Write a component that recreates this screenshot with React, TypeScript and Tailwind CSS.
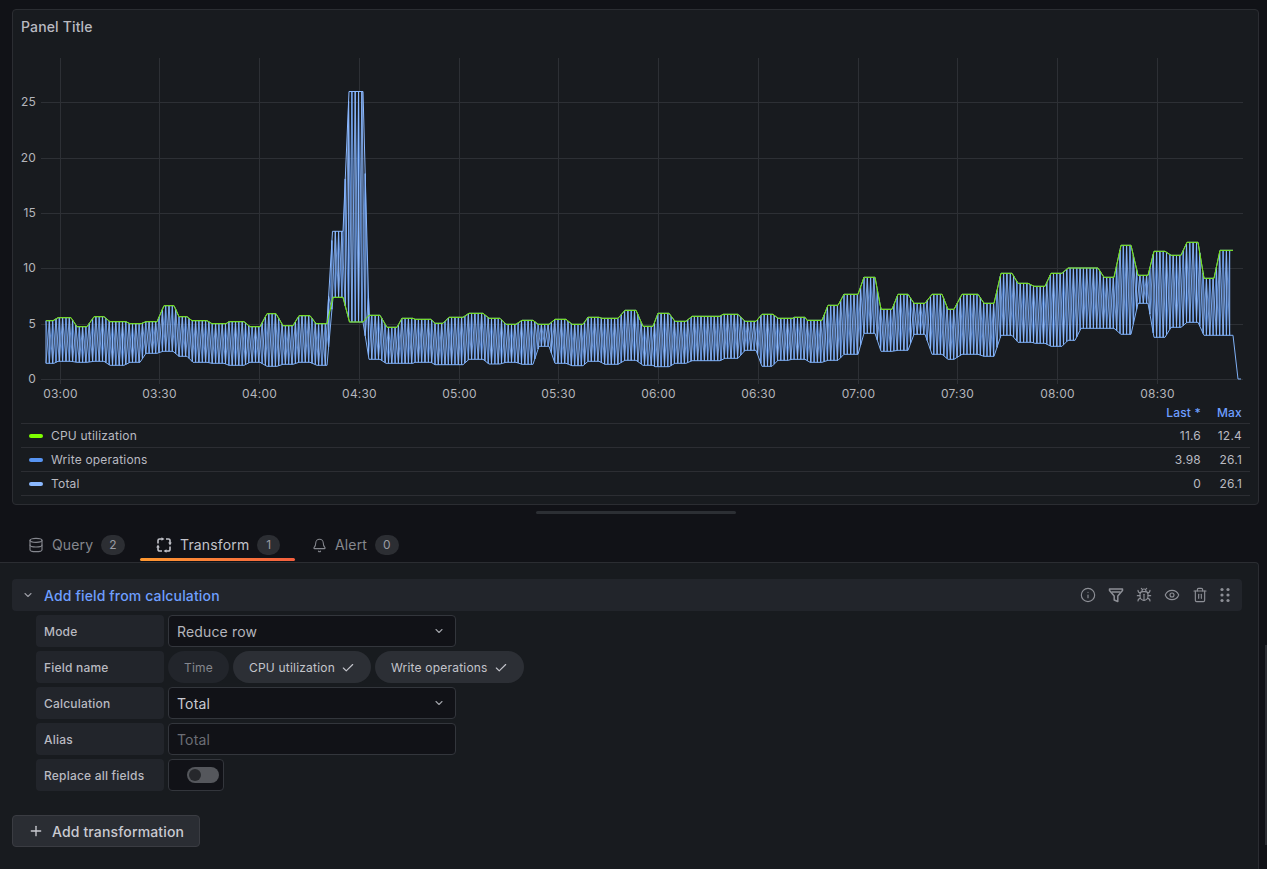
import React from "react";
import { Database, Bell, Info, Bug, Eye, Trash2, Check, ChevronDown, Plus } from "lucide-react";

type P = [number, number, number];

const topP: P[] = [
  [46,53,320.7],[58,71,317.7],[77,87,326.7],[94,104,316.7],[110,126,321.7],[130,141,323.7],[146,157,321.7],[164,174,305.7],
  [179,187,316.7],[192,207,320.7],[212,226,323.7],[229,244,321.7],[250,260,326.7],[267,276,313.7],[283,293,325.7],[299,310,315.7],
  [316,327,323.7],[332.5,343,231.3],[349,363,91.5],[369,380,315.3],[387,397,327.3],[402,413,318.3],[415,431,319.3],[435,443,323.3],
  [449,463,317.3],[469,483,313.3],[489,500,318.3],[506,516,324.3],[522,533,320.3],[538,549,324.3],[555,566,319.3],[572,583,324.3],
  [588,599,317.3],[602,618,318.3],[625,636,310.3],[643,653,326.3],[658,669,313.3],[675,686,321.3],[692,720,316.3],[723,738,314.3],
  [745,756,321.3],[762,773,314.3],[778,793,318.3],[794,805,317.3],[807,822,320.3],[828,838,305.3],[844,858,294.3],[864,875,277.3],
  [881,892,309.3],[898,908,294.3],[914,925,303.3],[932,942,294.3],[948,954,309.3],[962,978,294.3],[984,994,303.3],[1001,1012,273.3],
  [1018,1028,283.3],[1034,1045,286.3],[1051,1062,273.3],[1068,1098,268],[1104,1114,277.3],[1121,1131,245.3],[1138,1148,275.3],
  [1154,1165,251.3],[1171,1181,255.3],[1187,1198,242.3],[1204,1214,278.3],[1220,1233,250.3],
];

const botP: P[] = [
  [46,54,363.3],[58,71,361.3],[77,87,362.3],[94,104,361.3],[110,124,365.3],[130,140,362.3],[146,157,353.3],[163,173,351.3],
  [179,187,356.3],[193,207,362.3],[212,224,363.3],[229,244,365.3],[250,260,362.3],[267,277,366.3],[283,293,364.3],[299,310,362.3],
  [317,327,365.3],[333,343,297.3],[349.5,363,322],[369,380,359.3],[386,413,363.3],[415,431,362.3],[435,463,364.7],[469,483,359.3],
  [489,500,364],[506,516,362.3],[522,533,364.3],[539,549,346.3],[555,566,363.3],[572,583,365.7],[588,599,361.3],[605,618,364.3],
  [625,636,360.3],[643,653,365.3],[655,669,366.7],[675,686,363.3],[692,720,360.7],[725,738,358.3],[745,756,350.3],[762,772,366.3],
  [778,788,360.3],[792,805,359.3],[810,822,362.3],[828,838,360.3],[844,858,354.3],[864,875,333.3],[881,892,351.3],[898,908,350.3],
  [914,925,334.3],[932,942,354.3],[948,954,359.3],[962,978,354.3],[984,994,356.3],[1001,1012,335.3],[1018,1032,342.3],[1035,1045,343.3],
  [1051,1062,346.3],[1068,1075,340.3],[1081,1114,328.3],[1121,1131,334.3],[1138,1148,303.3],[1154,1165,337.3],[1171,1181,327.3],
  [1187,1198,322.3],[1204,1233,335.3],
];

const cpuP: P[] = [
  ...topP.filter((p) => p[0] < 330),
  [333,343,297.3],[349.5,363,322],
  ...topP.filter((p) => p[0] >= 369),
];

const pts = (l: P[]) => l.flatMap(([a, b, y]) => [[a, y], [b, y]] as [number, number][]);
const interp = (l: P[]) => {
  const q = pts(l);
  return (x: number) => {
    for (let i = 1; i < q.length; i++) {
      if (x <= q[i][0]) {
        const [x0, y0] = q[i - 1];
        const [x1, y1] = q[i];
        return y0 + ((y1 - y0) * (x - x0)) / Math.max(x1 - x0, 0.01);
      }
    }
    return q[q.length - 1][1];
  };
};
const line = (q: [number, number][]) => q.map(([x, y], i) => `${i ? "L" : "M"}${x.toFixed(1)} ${y.toFixed(1)}`).join("");

const top = interp(topP);
const bot = interp(botP);
const xs: number[] = [];
for (let x = 46; x <= 1233; x += 3.325) xs.push(x);

const verticals = xs.map((x) => `M${x.toFixed(1)} ${top(x).toFixed(1)}V${bot(x).toFixed(1)}`).join("");
const zig = line(xs.map((x, i) => [x, i % 2 ? bot(x) : top(x)] as [number, number]));
const zig2 = line(xs.map((x, i) => [x, i % 2 ? top(x) : bot(x)] as [number, number]));

const yTicks: [string, number, number][] = [["25", 102.5, 106], ["20", 158.5, 162], ["15", 213.5, 217], ["10", 268.5, 272], ["5", 324.5, 328], ["0", 379.5, 383]];
const xTicks: [string, number][] = [
  ["03:00", 60.5], ["03:30", 159.5], ["04:00", 259.5], ["04:30", 359.5], ["05:00", 459.5], ["05:30", 558.5],
  ["06:00", 658.5], ["06:30", 758.5], ["07:00", 858.5], ["07:30", 957.5], ["08:00", 1057.5], ["08:30", 1157.5],
];

function Chart() {
  return (
    <svg className="block w-[1244px] h-[360px]" viewBox="13 44 1244 360" fill="none">
      {yTicks.map(([t, y, ty]) => (
        <g key={t}>
          <line x1="41" x2="1243" y1={y} y2={y} stroke="#2d3035" />
          <text x="36" y={ty} textAnchor="end" fontSize="12" letterSpacing="0.2" fill="#b4b5bb">{t}</text>
        </g>
      ))}
      {xTicks.map(([t, x]) => (
        <g key={t}>
          <line x1={x} x2={x} y1="58" y2="384" stroke="#2d3035" />
          <text x={x} y="398" textAnchor="middle" fontSize="12" letterSpacing="0.2" fill="#b4b5bb">{t}</text>
        </g>
      ))}
      <path d={zig} stroke="#5794f2" strokeWidth="0.9" opacity="0.8" />
      <path d={zig2} stroke="#8ab8ff" strokeWidth="0.9" opacity="0.85" />
      <path d={verticals} stroke="#8ab8ff" strokeWidth="1" />
      <path d={line([...pts(botP), [1238, 379], [1241, 379]])} stroke="#7fb0f5" strokeWidth="1" />
      <path d={line(pts(topP))} stroke="#8ab8ff" strokeWidth="1" />
      <path d={line(pts(cpuP))} stroke="#73e600" strokeWidth="1" />
    </svg>
  );
}

function LegendRow({ color, name, last, max, end }: { color: string; name: string; last: string; max: string; end?: boolean }) {
  return (
    <div className={`flex items-center border-t border-[#2c2e33] text-xs tracking-[0.01667em] text-[#b9bac1] ${end ? "h-[25px] border-b" : "h-6"}`}>
      <span className="ml-2 w-[14px] h-1 rounded-sm" style={{ background: color }} />
      <span className="ml-2">{name}</span>
      <span className="ml-auto w-[60px] text-right">{last}</span>
      <span className="w-[41px] text-right mr-2">{max}</span>
    </div>
  );
}

function TransformIcon() {
  return (
    <svg width="16" height="16" viewBox="0 0 16 16" fill="none" stroke="currentColor" strokeWidth="1.6">
      <path d="M2 6.5V3.5a1.5 1.5 0 0 1 1.5-1.5H6" />
      <path d="M10 2h2.5A1.5 1.5 0 0 1 14 3.5V6" />
      <path d="M14 9.5v3a1.5 1.5 0 0 1-1.5 1.5H10" />
      <path d="M6 14H3.5A1.5 1.5 0 0 1 2 12.500V10" />
      <path d="M5.500 .2 8.500 2 5.500 3.800zM12.200 5.500h3.600L14 8.500zM10.500 12.200v3.600L7.500 14zM.2 10.500 2 7.500l1.800 3z" fill="currentColor" stroke="none" />
    </svg>
  );
}

function FilterIcon() {
  return (
    <svg width="16" height="16" viewBox="0 0 16 16" fill="none" stroke="currentColor" strokeWidth="1.5" strokeLinejoin="round">
      <path d="M1.500 2h13v1.500L9.800 9v5.500L6.200 13V9L1.500 3.500z" />
      <path d="M3.500 5h9" />
    </svg>
  );
}

function DragDots() {
  return (
    <svg width="16" height="16" viewBox="0 0 16 16" fill="currentColor">
      <circle cx="5" cy="2.5" r="1.6" /><circle cx="11" cy="2.5" r="1.6" />
      <circle cx="5" cy="8" r="1.6" /><circle cx="11" cy="8" r="1.6" />
      <circle cx="5" cy="13.5" r="1.6" /><circle cx="11" cy="13.5" r="1.6" />
    </svg>
  );
}

function Tab({ icon, label, count, w, active }: { icon: React.ReactNode; label: string; count: string; w: string; active?: boolean }) {
  return (
    <div className={`relative flex items-center h-[29px] pl-4 pb-[5px] text-sm tracking-[0.01071em] ${w} ${active ? "text-[#c2c3ca]" : "text-[#85878e]"}`}>
      <span className="w-4 h-4 mr-2 flex items-center justify-center">{icon}</span>
      <span>{label}</span>
      <span className="ml-2 h-5 min-w-[23px] px-2 rounded-full bg-[#2c2e33] text-xs flex items-center justify-center text-[#9a9ca3]">{count}</span>
      {active && <span className="absolute left-0 right-0 bottom-[1px] h-[3px] rounded-sm bg-gradient-to-r from-[#ff9830] to-[#f55f3e]" />}
    </div>
  );
}

function Label({ children }: { children: React.ReactNode }) {
  return <div className="w-32 h-8 px-2 pt-[1px] flex items-center bg-[#22252b] rounded-sm text-xs font-medium tracking-[0.01667em] text-[#b9bac1]">{children}</div>;
}

function SelectBox({ value, muted }: { value: string; muted?: boolean }) {
  return (
    <div className={`w-72 h-8 pl-2 pr-[10px] flex items-center justify-between bg-[#111217] border border-[#33363c] rounded-sm text-sm tracking-[0.01071em] ${muted ? "text-[#b4b5bc]" : "text-[#c9cad1]"}`}>
      <span className="pt-[1px]">{value}</span>
      <ChevronDown size={12} strokeWidth={2.2} className="text-[#a0a2a8]" />
    </div>
  );
}

function Chip({ text, on }: { text: string; on?: boolean }) {
  return (
    <div className={`h-8 px-4 pt-[1px] flex items-center gap-[6px] rounded-full text-xs tracking-[0.01667em] ${on ? "bg-[#2c2f35] text-[#c3c4cb]" : "bg-[#22252b] text-[#85878e]"}`}>
      <span>{text}</span>
      {on && <Check size={14} strokeWidth={2} />}
    </div>
  );
}

export default function App() {
  return (
    <div className="relative w-[1267px] h-[869px] overflow-hidden bg-[#111217] font-[Inter,sans-serif]">
      <div className="pt-[9px] pl-3">
        <div className="w-[1247px] h-[496px] bg-[#181b1f] border border-[#2b2d32] rounded-sm">
          <div className="h-[34px] px-2 flex items-center text-sm font-medium tracking-[0.01071em] text-[#b9bac1]">Panel Title</div>
          <Chart />
          <div className="mx-2 w-[1229px]">
            <div className="h-[19px] pb-[2px] flex items-center justify-end text-xs font-medium tracking-[0.01667em] text-[#6e9fff]">
              <span className="w-[60px] text-right">Last *</span>
              <span className="w-[41px] mr-2 text-right">Max</span>
            </div>
            <LegendRow color="#7eff00" name="CPU utilization" last="11.6" max="12.4" />
            <LegendRow color="#5794f2" name="Write operations" last="3.98" max="26.1" />
            <LegendRow color="#8ab8ff" name="Total" last="0" max="26.1" end />
          </div>
        </div>
      </div>

      <div className="ml-[536px] mt-[6px] w-[200px] h-[3px] rounded-sm bg-[#2c2f34]" />

      <div className="mt-[19px] pl-3 flex">
        <Tab w="w-[128px]" icon={<Database size={16} strokeWidth={1.7} />} label="Query" count="2" />
        <Tab w="w-[155px]" icon={<TransformIcon />} label="Transform" count="1" active />
        <Tab w="w-[120px]" icon={<Bell size={15} strokeWidth={1.7} />} label="Alert" count="0" />
      </div>

      <div className="w-[1259px] h-[307px] bg-[#181b1f] border-t border-r border-[#2b2d32] rounded-tr-sm px-3 pt-4">
        <div className="w-[1230px] h-8 flex items-center bg-[#22252b] rounded-sm">
          <ChevronDown size={12} strokeWidth={2.2} className="ml-[10px] text-[#9a9ca3]" />
          <span className="ml-[10px] pt-[1px] text-sm font-medium tracking-[0.01071em] text-[#6e9fff]">Add field from calculation</span>
          <div className="ml-auto mr-[9px] flex items-center gap-3 text-[#8d8f96]">
            <Info size={16} strokeWidth={1.7} />
            <FilterIcon />
            <Bug size={16} strokeWidth={1.7} />
            <Eye size={16} strokeWidth={1.7} />
            <Trash2 size={16} strokeWidth={1.7} />
            <span className="ml-[-3px]"><DragDots /></span>
          </div>
        </div>

        <div className="pl-6 pt-1 flex flex-col gap-1">
          <div className="flex gap-1"><Label>Mode</Label><SelectBox value="Reduce row" muted /></div>
          <div className="flex gap-1">
            <Label>Field name</Label>
            <Chip text="Time" />
            <Chip text="CPU utilization" on />
            <Chip text="Write operations" on />
          </div>
          <div className="flex gap-1"><Label>Calculation</Label><SelectBox value="Total" /></div>
          <div className="flex gap-1">
            <Label>Alias</Label>
            <div className="w-72 h-8 px-2 pt-[1px] flex items-center bg-[#111217] border border-[#33363c] rounded-sm text-sm tracking-[0.01071em] text-[#6c6e75]">Total</div>
          </div>
          <div className="flex gap-1">
            <Label>Replace all fields</Label>
            <div className="w-14 h-8 flex items-center justify-end pr-1 bg-[#111217] border border-[#33363c] rounded-sm">
              <div className="w-8 h-4 rounded-full bg-[#55575c] flex items-center pl-[2px]">
                <div className="w-3 h-3 rounded-full bg-[#26282c]" />
              </div>
            </div>
          </div>
        </div>

        <div className="mt-6 w-[188px] h-8 flex items-center bg-[#2a2d33] border border-[#3a3c42] rounded-sm text-sm font-medium tracking-[0.01071em] text-[#c9cad1]">
          <Plus size={16} className="ml-[15px] mr-2" />
          <span className="pt-[1px]">Add transformation</span>
        </div>
      </div>

      <div className="absolute left-[1265px] top-[645px] w-[2px] h-[200px] bg-[#2c2e33]" />
    </div>
  );
}
